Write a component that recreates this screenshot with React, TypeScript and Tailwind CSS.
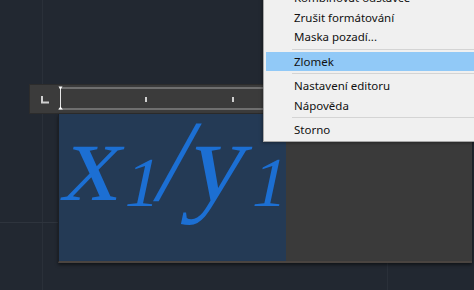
import React from "react";

const menuItems: Array<{ type: "item" | "sep"; label?: string; active?: boolean }> = [
  { type: "item", label: "Kombinovat odstavce" },
  { type: "item", label: "Zrušit formátování" },
  { type: "item", label: "Maska pozadí..." },
  { type: "sep" },
  { type: "item", label: "Zlomek", active: true },
  { type: "sep" },
  { type: "item", label: "Nastavení editoru" },
  { type: "item", label: "Nápověda" },
  { type: "sep" },
  { type: "item", label: "Storno" },
];

export default function App() {
  return (
    <div className="relative w-[474px] h-[290px] overflow-hidden bg-[#222831]">
      {/* background grid drawing */}
      <svg className="absolute inset-0" width="474" height="290">
        <line x1="42.5" y1="0" x2="42.5" y2="290" stroke="#2a3039" strokeWidth="1" />
        <line x1="0" y1="222.5" x2="58" y2="222.5" stroke="#2e343d" strokeWidth="1" />
        <line x1="387.5" y1="263" x2="387.5" y2="290" stroke="#2a3039" strokeWidth="1" />
      </svg>

      <div className="relative pt-[84px] pl-[29px] flex flex-col">
        {/* ruler */}
        <div className="flex h-[30px] w-[443px] bg-[#3b3b3b] border border-[#2c2c2c]">
          <div className="w-[29px] flex items-center justify-center">
            <svg width="10" height="9" viewBox="0 0 10 9">
              <path d="M2 1 V7.5 H9" fill="none" stroke="#cfcfcf" strokeWidth="2" />
            </svg>
          </div>
          <div className="relative flex-1 flex flex-col pt-[2px]">
            <div className="h-[2px] bg-[#6f6f6f]" />
            <div className="flex-1 relative">
              <div className="absolute left-[86px] top-[8px] w-[2px] h-[5px] bg-[#d0d0d0]" />
              <div className="absolute left-[173px] top-[8px] w-[2px] h-[5px] bg-[#d0d0d0]" />
            </div>
            <div className="h-[2px] bg-[#6f6f6f] mb-[3px]" />
            {/* indent marker */}
            <svg className="absolute left-[-1px] top-[1px]" width="6" height="25" viewBox="0 0 6 25">
              <line x1="2.5" y1="2" x2="2.5" y2="23" stroke="#e6e6e6" strokeWidth="1" />
              <path d="M0.5 0.5 H4.5 L2.5 3.5 Z" fill="#ffffff" />
              <path d="M2.5 20.5 L4.8 23.5 H0.2 Z" fill="#ffffff" />
            </svg>
          </div>
        </div>

        {/* editor area */}
        <div className="ml-[29px] w-[414px] h-[149px] flex bg-[#3a3a3a] border-l border-[#1c1f24] border-b-2 border-b-[#4a4440] shadow-[0_2px_3px_rgba(0,0,0,0.5)]">
          <div className="w-[227px] h-full bg-[#243a55] overflow-visible">
            <div className="flex items-baseline whitespace-nowrap text-[#1c6fd3] leading-none mt-[-11px] -skew-x-12 origin-[0px_98px] font-['Liberation_Serif','Times_New_Roman',serif]">
              <span className="text-[116px]">x</span>
              <span className="text-[70px] relative top-[6px] ml-[5px]">1</span>
              <span className="text-[116px] ml-[-4px]">/</span>
              <span className="text-[116px] ml-[-2px]">y</span>
              <span className="text-[70px] relative top-[6px] ml-[8px]">1</span>
            </div>
          </div>
          <div className="flex-1" />
        </div>
      </div>

      {/* context menu */}
      <div className="absolute left-[263px] top-[-13px] w-[220px] bg-[#f0f0f0] border border-[#a7a7a7] pb-[1px] pl-[2px] shadow-[-1px_1px_3px_rgba(0,0,0,0.35)] font-['Noto_Sans','Open_Sans',sans-serif]">
        {menuItems.map((it, i) =>
          it.type === "sep" ? (
            <div key={i} className="h-[5px] flex items-center pl-[26px]">
              <div className="h-[1px] w-full bg-[#d4d4d4]" />
            </div>
          ) : (
            <div
              key={i}
              className={
                "h-[19.5px] flex items-center pl-[28px] text-[11.5px] text-[#111111] " +
                (it.active ? "bg-[#91c9f7]" : "")
              }
            >
              {it.label}
            </div>
          )
        )}
      </div>
    </div>
  );
}
